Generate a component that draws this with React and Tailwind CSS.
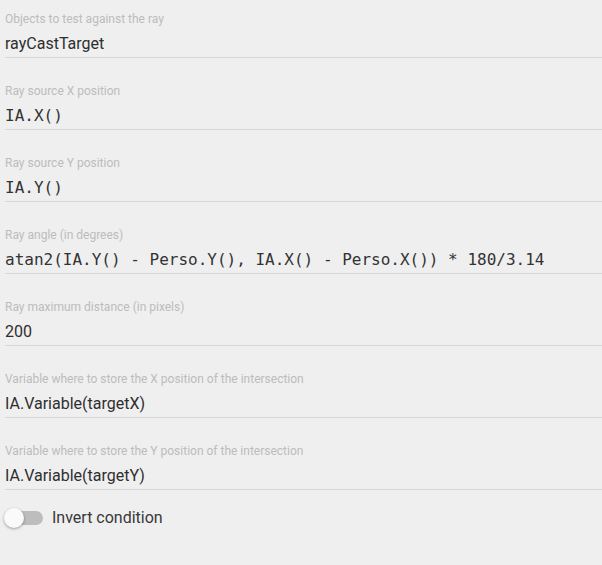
import React from "react";

const fields = [
  { label: "Objects to test against the ray", value: "rayCastTarget", mono: false },
  { label: "Ray source X position", value: "IA.X()", mono: true },
  { label: "Ray source Y position", value: "IA.Y()", mono: true },
  { label: "Ray angle (in degrees)", value: "atan2(IA.Y() - Perso.Y(), IA.X() - Perso.X()) * 180/3.14", mono: true },
  { label: "Ray maximum distance (in pixels)", value: "200", mono: false },
  { label: "Variable where to store the X position of the intersection", value: "IA.Variable(targetX)", mono: false },
  { label: "Variable where to store the Y position of the intersection", value: "IA.Variable(targetY)", mono: false },
];

function Field({ label, value, mono }) {
  return (
    <div className="flex flex-col pt-[12px] mb-[14px]">
      <div className="text-[12px] leading-[14px] text-[#bcbcbc] whitespace-nowrap">{label}</div>
      <div
        className={
          "mt-[8px] pb-[3px] h-[24px] border-b border-[#d7d7d7] text-[16px] leading-[20px] text-[#2e2e2e] whitespace-nowrap " +
          (mono ? "font-['DejaVu_Sans_Mono',monospace] text-[#333]" : "")
        }
      >
        {value}
      </div>
    </div>
  );
}

export default function App() {
  return (
    <div className="w-[602px] h-[565px] bg-[#efefef] pl-[5px] font-['Roboto',sans-serif] overflow-hidden">
      {fields.map((f) => (
        <Field key={f.label} {...f} />
      ))}
      <div className="flex items-center h-[28px]">
        <div className="relative w-[38px] h-[14px] flex items-center">
          <div className="w-[38px] h-[14px] rounded-full bg-[#bdbdbd]" />
          <div className="absolute -left-[1px] top-[-3px] w-[20px] h-[20px] rounded-full bg-[#fafafa] shadow-[0_1px_3px_rgba(0,0,0,0.35)]" />
        </div>
        <span className="ml-[9px] text-[16px] text-[#383838]">Invert condition</span>
      </div>
    </div>
  );
}
